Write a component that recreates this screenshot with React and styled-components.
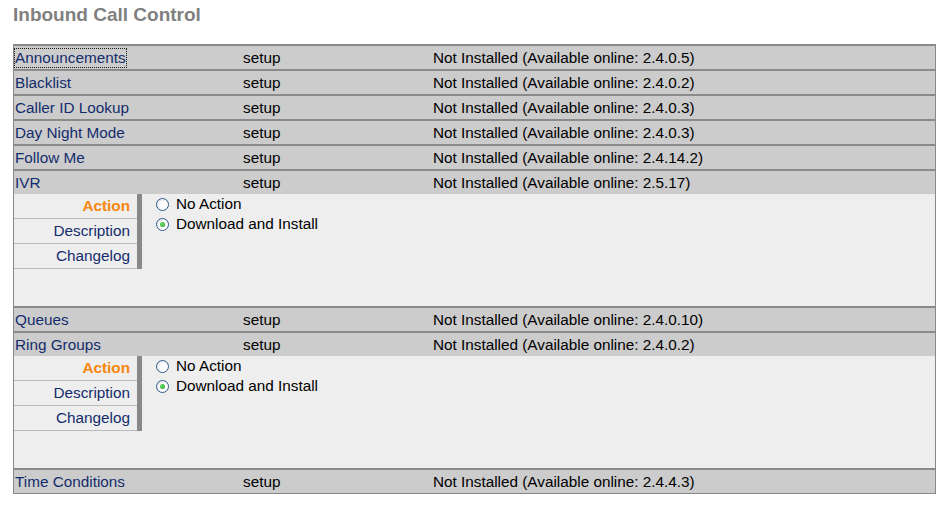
import React from "react";
import styled, { createGlobalStyle } from "styled-components";

const Global = createGlobalStyle`
  html, body {
    margin: 0;
    padding: 0;
    background: #ffffff;
  }
  body {
    font-family: "Liberation Sans", Arial, sans-serif;
  }
`;

const Page = styled.div`
  padding: 3px 8px 0 13px;
`;

const Title = styled.h2`
  margin: 0 0 18px 0;
  font-size: 19px;
  line-height: 23px;
  font-weight: bold;
  color: #808080;
`;

const Table = styled.div`
  border-left: 1px solid #888888;
  border-right: 1px solid #888888;
  border-bottom: 1px solid #888888;
  font-size: 15.3px;
`;

const Row = styled.div`
  display: grid;
  grid-template-columns: 228px 190px 1fr;
  align-items: center;
  height: 23px;
  padding-left: 1px;
  background: #cccccc;
  border-top: 2px solid #8a8a8a;
  color: #000000;
`;

const Name = styled.a`
  justify-self: start;
  color: #142c6c;
  text-decoration: none;
  line-height: 18px;
  outline: ${(p) => (p.$focused ? "1px dotted #1a1a1a" : "none")};
`;

const Panel = styled.div`
  display: flex;
  height: 112px;
  background: #eeeeee;
`;

const Tabs = styled.div`
  display: flex;
  flex-direction: column;
  width: 123px;
  align-self: flex-start;
  border-right: 5px solid #888888;
`;

const Tab = styled.div`
  height: 24px;
  line-height: 24px;
  text-align: right;
  padding-right: 7px;
  background: #eeeeee;
  border-bottom: 1px solid #bbbbbb;
  color: ${(p) => (p.$active ? "#f7870f" : "#142c6c")};
  font-weight: ${(p) => (p.$active ? "bold" : "normal")};
`;

const Options = styled.div`
  display: flex;
  flex-direction: column;
  padding: 0 0 0 14px;
`;

const Option = styled.label`
  display: flex;
  align-items: center;
  gap: 7px;
  height: 20px;
  color: #000000;
`;

const Radio = styled.span`
  position: relative;
  width: 11px;
  height: 11px;
  border-radius: 50%;
  border: 1px solid #2d5b8c;
  background: radial-gradient(circle at 65% 65%, #ffffff 40%, #d8dde4 100%);

  &::after {
    content: "";
    display: ${(p) => (p.$checked ? "block" : "none")};
    position: absolute;
    left: 3px;
    top: 3px;
    width: 5px;
    height: 5px;
    border-radius: 50%;
    background: radial-gradient(circle at 40% 40%, #6fdc6f, #1f9c1f);
  }
`;

const modules = [
  { name: "Announcements", version: "2.4.0.5", focused: true },
  { name: "Blacklist", version: "2.4.0.2" },
  { name: "Caller ID Lookup", version: "2.4.0.3" },
  { name: "Day Night Mode", version: "2.4.0.3" },
  { name: "Follow Me", version: "2.4.14.2" },
  { name: "IVR", version: "2.5.17", open: true },
  { name: "Queues", version: "2.4.0.10" },
  { name: "Ring Groups", version: "2.4.0.2", open: true },
  { name: "Time Conditions", version: "2.4.4.3" },
];

const ModulePanel = () => (
  <Panel>
    <Tabs>
      <Tab $active>Action</Tab>
      <Tab>Description</Tab>
      <Tab>Changelog</Tab>
    </Tabs>
    <Options>
      <Option>
        <Radio />
        No Action
      </Option>
      <Option>
        <Radio $checked />
        Download and Install
      </Option>
    </Options>
  </Panel>
);

const App = () => {
  return (
    <Page>
      <Global />
      <Title>Inbound Call Control</Title>
      <Table>
        {modules.map((m) => (
          <React.Fragment key={m.name}>
            <Row>
              <Name href="#" $focused={m.focused}>
                {m.name}
              </Name>
              <span>setup</span>
              <span>Not Installed (Available online: {m.version})</span>
            </Row>
            {m.open && <ModulePanel />}
          </React.Fragment>
        ))}
      </Table>
    </Page>
  );
};

export default App;
